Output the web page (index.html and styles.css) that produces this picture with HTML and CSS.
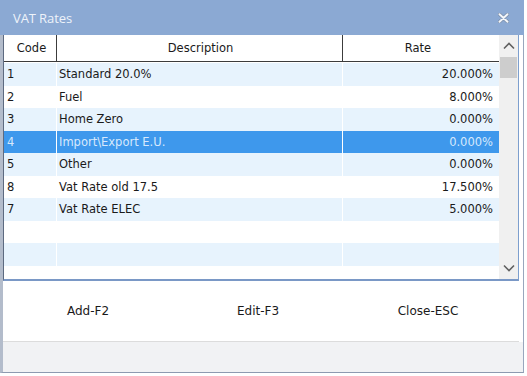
FILE: index.html
```html
<!DOCTYPE html>
<html>
<head>
<meta charset="utf-8">
<link rel="stylesheet" href="styles.css">
</head>
<body>
<div class="window">
  <div class="titlebar">
    <span class="title">VAT Rates</span>
    <span class="close"><svg width="11" height="10" viewBox="0 0 11 10"><path d="M1.5 1.2 L9.5 8.8 M9.5 1.2 L1.5 8.8" fill="none" stroke="#7a8da8" stroke-width="3.4" stroke-linecap="round"/><path d="M1.5 1.2 L9.5 8.8 M9.5 1.2 L1.5 8.8" fill="none" stroke="#f3f6fa" stroke-width="2" stroke-linecap="round"/></svg></span>
  </div>
  <div class="frame">
    <div class="grid">
      <div class="table">
        <div class="row head">
          <div class="c code">Code</div>
          <div class="c desc">Description</div>
          <div class="c rate">Rate</div>
        </div>
        <div class="rows">
          <div class="row alt"><div class="c code">1</div><div class="c desc">Standard 20.0%</div><div class="c rate">20.000%</div></div>
          <div class="row"><div class="c code">2</div><div class="c desc">Fuel</div><div class="c rate">8.000%</div></div>
          <div class="row alt"><div class="c code">3</div><div class="c desc">Home Zero</div><div class="c rate">0.000%</div></div>
          <div class="row sel"><div class="c code">4</div><div class="c desc">Import\Export E.U.</div><div class="c rate">0.000%</div></div>
          <div class="row alt"><div class="c code">5</div><div class="c desc">Other</div><div class="c rate">0.000%</div></div>
          <div class="row"><div class="c code">8</div><div class="c desc">Vat Rate old 17.5</div><div class="c rate">17.500%</div></div>
          <div class="row alt"><div class="c code">7</div><div class="c desc">Vat Rate ELEC</div><div class="c rate">5.000%</div></div>
          <div class="row"><div class="c code"></div><div class="c desc"></div><div class="c rate"></div></div>
          <div class="row alt"><div class="c code"></div><div class="c desc"></div><div class="c rate"></div></div>
          <div class="row"><div class="c code"></div><div class="c desc"></div><div class="c rate"></div></div>
        </div>
      </div>
      <div class="scrollbar">
        <div class="arrow up"><svg width="12" height="8" viewBox="0 0 12 8"><path d="M1 6.5 L6 1.5 L11 6.5" fill="none" stroke="#606060" stroke-width="1.6"/></svg></div>
        <div class="thumb"></div>
        <div class="track"></div>
        <div class="arrow down"><svg width="12" height="8" viewBox="0 0 12 8"><path d="M1 1.5 L6 6.5 L11 1.5" fill="none" stroke="#606060" stroke-width="1.6"/></svg></div>
      </div>
    </div>
    <div class="buttons">
      <div class="btn">Add-F2</div>
      <div class="btn">Edit-F3</div>
      <div class="btn">Close-ESC</div>
    </div>
    <div class="status"></div>
  </div>
</div>
</body>
</html>
```

FILE: styles.css
```css
html, body {
  margin: 0;
  padding: 0;
  background: #ffffff;
}
body {
  width: 527px;
  height: 376px;
  overflow: hidden;
  font-family: "DejaVu Sans", sans-serif;
  font-size: 11.5px;
  color: #1a1a1a;
}
.window {
  width: 524px;
  height: 373px;
  display: flex;
  flex-direction: column;
  box-sizing: border-box;
}
.titlebar {
  height: 35px;
  flex: none;
  background: #8ba9d3;
  display: flex;
  align-items: center;
  justify-content: space-between;
  padding: 0 15px 0 13px;
  color: #eef3fa;
}
.title {
  font-family: "Open Sans", sans-serif;
  font-size: 13px;
  letter-spacing: -0.1px;
}
.close {
  display: flex;
  align-items: center;
}
.frame {
  flex: 1;
  display: flex;
  flex-direction: column;
  border-left: 3px solid #b3bccb;
  border-right: 1px solid #98a6bd;
  border-bottom: 1px solid #8d9ab0;
  background: #ffffff;
}
.grid {
  height: 246px;
  flex: none;
  display: flex;
  border-left: 1px solid #5d6a80;
  border-right: 1px solid #7d9fce;
  border-bottom: 2px solid #7a98c6;
  width: 516px;
  box-sizing: border-box;
}
.table {
  width: 495px;
  display: flex;
  flex-direction: column;
  overflow: hidden;
}
.row {
  display: flex;
  height: 22.5px;
  flex: none;
  align-items: center;
}
.row.head {
  height: 26px;
  background: #ffffff;
  border-bottom: 1px solid #3c3c3c;
}
.head .c {
  text-align: center;
  height: 100%;
  display: flex;
  align-items: center;
  justify-content: center;
}
.head .code, .head .desc {
  border-right: 1px solid #3c3c3c;
}
.rows {
  flex: 1;
  overflow: hidden;
  padding-top: 1px;
}
.c {
  box-sizing: border-box;
  height: 100%;
  display: flex;
  align-items: center;
  white-space: nowrap;
}
.code {
  width: 53px;
  padding-left: 3px;
}
.desc {
  width: 286px;
  padding-left: 2px;
}
.rate {
  width: 156px;
  justify-content: flex-end;
  padding-right: 6px;
}
.rows .code, .rows .desc {
  border-right: 1px solid #ffffff;
}
.row.alt {
  background: #e7f3fd;
}
.row.sel {
  background: #3e98ec;
  color: #d7e9fc;
}
.scrollbar {
  width: 19px;
  background: #f0f0f0;
  display: flex;
  flex-direction: column;
}
.arrow {
  height: 22px;
  display: flex;
  align-items: center;
  justify-content: center;
  flex: none;
}
.thumb {
  height: 21px;
  margin: 0 1px;
  background: #cdcdcd;
  flex: none;
}
.track {
  flex: 1;
}
.buttons {
  height: 60px;
  flex: none;
  display: flex;
  border-bottom: 1px solid #dcdcdc;
  width: 516px;
}
.btn {
  width: 170px;
  display: flex;
  align-items: center;
  justify-content: center;
  font-size: 12px;
}
.status {
  flex: 1;
  background: #f1f2f4;
}
```
